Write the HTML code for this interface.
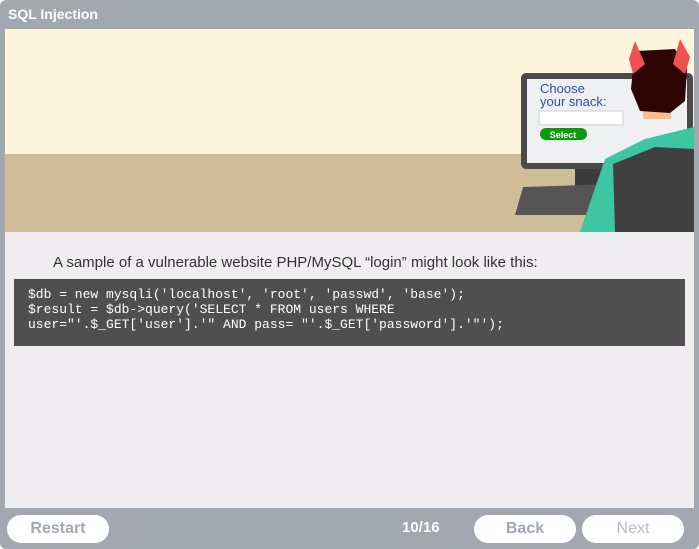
<!DOCTYPE html><html><head><style>
body{margin:0;width:699px;height:549px;background:#fff;font-family:"Liberation Sans",sans-serif;overflow:hidden}
.f{position:absolute;left:0;top:0;width:699px;height:549px;background:#a3a8b0;border-radius:6px}
.t{position:absolute;left:8px;top:6px;color:#fff;font-weight:bold;font-size:14px}
.c{position:absolute;left:5px;top:29px;width:689px;height:479px;background:#efedf0}
.code{position:absolute;left:14px;top:279px;width:671px;height:67px;background:#4f4f4f;color:#fff;font:13px/15px "Liberation Mono",monospace;box-sizing:border-box;padding:8px 14px;white-space:pre}
.b{position:absolute;top:515px;height:28px;width:102px;background:#fff;border-radius:14px;color:#a3a8b0;font-weight:bold;font-size:16px;text-align:center;line-height:28px}
</style></head><body><div class="f">
<div class="t">SQL Injection</div>
<div class="c"></div>
<svg style="position:absolute;left:5px;top:29px" width="689" height="203">
<rect width="689" height="203" fill="#fdf5dc"/><rect y="125" width="689" height="78" fill="#cfbc98"/>
<rect x="516" y="44" width="172" height="96" rx="5" fill="#4a4a4a"/>
<rect x="522" y="50" width="160" height="84" fill="#eef0f2"/>
<text x="535" y="64" font-size="13" fill="#2d4fa8" font-family="Liberation Sans">Choose</text>
<text x="535" y="77" font-size="13" fill="#2d4fa8" font-family="Liberation Sans">your snack:</text>
<rect x="534" y="82" width="84" height="14" fill="#fff" stroke="#ccc"/>
<rect x="535" y="99" width="47" height="12" rx="6" fill="#0a9a0a"/>
<text x="558" y="109" font-size="9" fill="#fff" font-weight="bold" text-anchor="middle" font-family="Liberation Sans">Select</text>
<rect x="570" y="140" width="30" height="18" fill="#3a3a3a"/>
<polygon points="518,158 610,155 612,186 510,186" fill="#555"/>
<polygon points="575,203 600,130 640,110 689,98 689,203" fill="#3ec6a3"/>
<polygon points="610,203 608,135 650,118 689,120 689,203" fill="#404040"/>
<rect x="638" y="72" width="28" height="18" fill="#f7c08a"/>
<polygon points="628,40 632,22 670,20 682,40 680,72 665,84 635,82 626,60" fill="#2d0505"/>
<polygon points="630,12 640,35 628,45 624,30" fill="#f05050"/><polygon points="675,10 685,28 680,45 668,35" fill="#f05050"/>
</svg>
<div style="position:absolute;left:53px;top:254px;font-size:15px;color:#333">A sample of a vulnerable website PHP/MySQL “login” might look like this:</div>
<div class="code">$db = new mysqli('localhost', 'root', 'passwd', 'base');
$result = $db-&gt;query('SELECT * FROM users WHERE
user="'.$_GET['user'].'" AND pass= "'.$_GET['password'].'"');</div>
<div class="b" style="left:7px">Restart</div>
<div style="position:absolute;left:402px;top:519px;color:#fff;font-weight:bold;font-size:15px">10/16</div>
<div class="b" style="left:474px">Back</div>
<div class="b" style="left:582px;font-weight:normal;color:#b8bcc2">Next</div>
</div></body></html>
